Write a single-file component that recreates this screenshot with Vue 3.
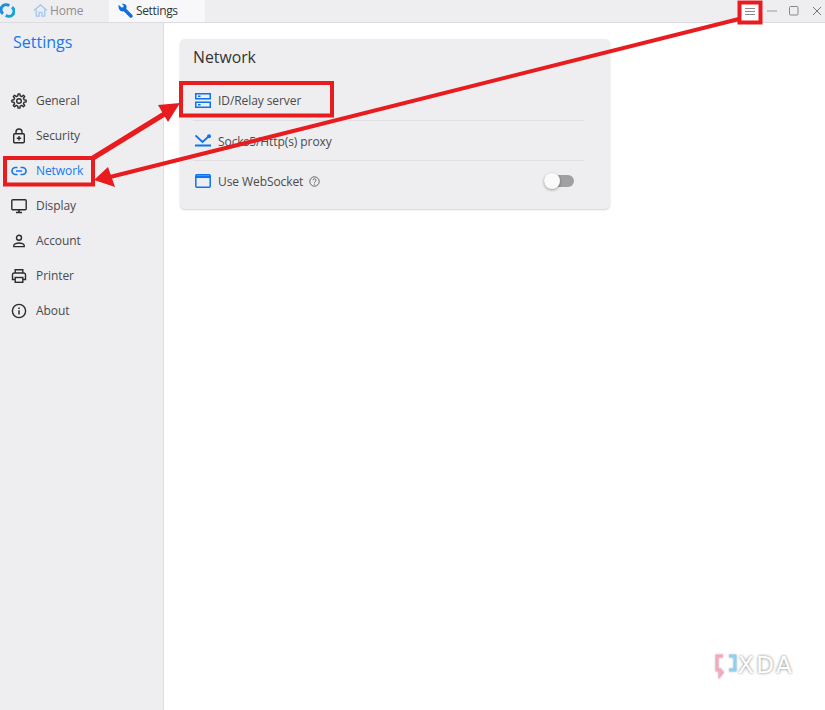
<script setup>
const nav = [
  { label: 'General', icon: 'gear' },
  { label: 'Security', icon: 'lock' },
  { label: 'Network', icon: 'link', active: true },
  { label: 'Display', icon: 'display' },
  { label: 'Account', icon: 'user' },
  { label: 'Printer', icon: 'printer' },
  { label: 'About', icon: 'info' },
]

function gearPath(cx, cy, outer, inner, teeth) {
  const pts = []
  const step = (Math.PI * 2) / teeth
  for (let i = 0; i < teeth; i++) {
    const a = i * step - Math.PI / 2
    const w = step * 0.2
    const at = (r, t) => `${(cx + r * Math.cos(t)).toFixed(2)} ${(cy + r * Math.sin(t)).toFixed(2)}`
    pts.push(at(inner, a - w * 1.5), at(outer, a - w * 0.8), at(outer, a + w * 0.8), at(inner, a + w * 1.5))
  }
  return 'M' + pts.join('L') + 'Z'
}
const gear = gearPath(8, 8, 7.2, 5.2, 8)
</script>

<template>
  <div class="app">
    <header class="titlebar">
      <svg class="logo" width="15" height="15" viewBox="0 0 16 16" fill="none">
        <path d="M3.200 11.500A5.400 5.400 0 0 1 9.800 2.900" stroke="#1a8fe0" stroke-width="3.200" />
        <path d="M12.800 4.500A5.400 5.400 0 0 1 6.200 13.100" stroke="#12a6d8" stroke-width="3.200" />
      </svg>
      <div class="tab home">
        <svg width="15" height="15" viewBox="0 0 16 16" fill="none" stroke="#a5c9ef" stroke-width="1.500">
          <path d="M1 8 8 2l7 6" />
          <path d="M3.500 7v7h3v-4h3v4h3V7" />
        </svg>
        <span>Home</span>
      </div>
      <div class="tab current">
        <svg width="16" height="16" viewBox="0 0 16 16" fill="#0d6fe0">
          <path d="M1.600 1.800 4.600 4.600 6.300 4.200 6.600 2.400 4.900 1C6.800.1 9.400 1.200 9.600 3.600 9.700 4.400 9.500 5.100 9.200 5.700L15.200 11.700C16 12.500 15.900 13.600 15.200 14.300 14.500 15 13.400 15 12.700 14.200L6.700 8.200C4 9 1 7.200 1.600 1.800Z" />
        </svg>
        <span>Settings</span>
      </div>
      <div class="window-controls">
        <button class="ctl menu" aria-label="Menu">
          <svg width="10" height="7" viewBox="0 0 10 7" stroke="#8a8a8a" fill="none"><path d="M0 .5h10M0 3.500h10M0 6.500h10" /></svg>
        </button>
        <button class="ctl" aria-label="Minimize">
          <svg width="10" height="10" viewBox="0 0 10 10" stroke="#999" fill="none"><path d="M0 5h10" /></svg>
        </button>
        <button class="ctl" aria-label="Maximize">
          <svg width="10" height="10" viewBox="0 0 10 10" stroke="#888" fill="none"><rect x=".5" y=".5" width="8.500" height="8.500" rx="1" /></svg>
        </button>
        <button class="ctl" aria-label="Close">
          <svg width="10" height="10" viewBox="0 0 10 10" stroke="#777" fill="none"><path d="M1 1l8 8M9 1 1 9" /></svg>
        </button>
      </div>
    </header>

    <div class="body">
      <aside class="sidebar">
        <h1 class="side-title">Settings</h1>
        <nav class="nav">
          <div v-for="item in nav" :key="item.label" class="nav-item" :class="{ active: item.active }">
            <svg class="nav-icon" width="16" height="16" viewBox="0 0 16 16" fill="none" stroke="currentColor" stroke-width="1.400">
              <template v-if="item.icon === 'gear'">
                <circle cx="8" cy="8" r="2.300" />
                <path :d="gear" stroke-linejoin="round" />
              </template>
              <template v-else-if="item.icon === 'lock'">
                <rect x="2.700" y="5.800" width="10.600" height="9" rx="1" />
                <path d="M5 5.800V4a3 3 0 0 1 6 0v1.800M8 8v4.600M5.800 10.300h4.400" />
              </template>
              <template v-else-if="item.icon === 'link'">
                <path d="M6.500 4.500H4.500a3.500 3.500 0 0 0 0 7h2M9.500 4.500h2a3.500 3.500 0 0 1 0 7h-2M5 8h6" stroke-width="1.700" />
              </template>
              <template v-else-if="item.icon === 'display'">
                <rect x=".8" y="1.800" width="14.400" height="10" rx="1" />
                <path d="M8 12v2.500M5 14.500h6" stroke-width="1.700" />
              </template>
              <template v-else-if="item.icon === 'user'">
                <circle cx="8" cy="4.800" r="2.500" />
                <path d="M2.800 13.600v-1c0-1.700 3.200-2.600 5.200-2.600s5.200.9 5.200 2.600v1Z" />
              </template>
              <template v-else-if="item.icon === 'printer'">
                <path d="M4.200 5V1.800h7.600V5M4 11.500H1.500V6.800A1.800 1.800 0 0 1 3.300 5h9.400a1.800 1.800 0 0 1 1.800 1.800v4.700H12" />
                <rect x="4.200" y="9.500" width="7.600" height="4.800" />
              </template>
              <template v-else>
                <circle cx="8" cy="8" r="6.600" />
                <path d="M8 7.200v4.300M8 4.400v1.500" stroke-width="1.500" />
              </template>
            </svg>
            <span>{{ item.label }}</span>
          </div>
        </nav>
      </aside>

      <main class="main">
        <section class="card">
          <h2 class="card-title">Network</h2>
          <div class="row first">
            <svg class="row-icon" width="16" height="15" viewBox="0 0 16 15" fill="#0d73ee">
              <path fill-rule="evenodd" d="M0 0h16v6.500H0ZM1.500 1.500v3.500h13V1.500ZM3 2.500h2.500v1.500H3ZM0 8.500h16V15H0ZM1.500 10v3.500h13V10ZM3 11h2.500v1.500H3Z" />
            </svg>
            <span>ID/Relay server</span>
          </div>
          <div class="row">
            <svg class="row-icon" width="16" height="14" viewBox="0 0 16 14" fill="none" stroke="#0d73ee" stroke-width="1.800">
              <path d="M.5 1.500 7.500 8 13 3M0 11.500h16" />
              <circle cx="14" cy="2.300" r="2" fill="#0d73ee" stroke="none" />
            </svg>
            <span>Socks5/Http(s) proxy</span>
          </div>
          <div class="row">
            <svg class="row-icon" width="16" height="14" viewBox="0 0 16 14" fill="none" stroke="#0d73ee" stroke-width="1.500">
              <rect x=".8" y=".8" width="14.400" height="12.400" rx="1" />
              <path d="M1 2.800h14" stroke-width="2.500" />
            </svg>
            <span>Use WebSocket</span>
            <svg class="help" width="11" height="11" viewBox="0 0 11 11" fill="none" stroke="#555" stroke-width=".9">
              <circle cx="5.500" cy="5.500" r="4.700" />
              <path d="M4 4.300a1.500 1.500 0 1 1 2.300 1.300c-.6.300-.8.600-.8 1.100M5.500 7.600v1" />
            </svg>
            <div class="switch"><span class="knob"></span></div>
          </div>
        </section>
      </main>
    </div>

    <svg class="annotations" width="825" height="710" viewBox="0 0 825 710" fill="none">
      <g stroke="#e81b1f" stroke-width="4">
        <rect x="739.500" y="2.500" width="21" height="20" />
        <rect x="5" y="158" width="88" height="26.500" />
        <rect x="181" y="83" width="151" height="32.500" />
        <path d="M739 19 106 178" />
        <path d="M93 158 166 113" stroke-width="5" />
      </g>
      <g fill="#e81b1f">
        <path d="M94 180 108 167 115 187Z" />
        <path d="M180 103 158 105 168 122Z" />
      </g>
    </svg>

    <div class="watermark">
      <svg width="24" height="26" viewBox="0 0 24 26" fill="none" stroke-width="3">
        <path d="M9 3H3v14h3v5l3-4" stroke="#f3a9bd" />
        <path d="M15 3h6v14h-6" stroke="#8fd0f2" />
      </svg>
      <span>XDA</span>
    </div>
  </div>
</template>

<style>
html, body { margin: 0; background: #fff; }
</style>

<style scoped>
.app {
  position: relative;
  width: 825px;
  height: 710px;
  overflow: hidden;
  background: #fff;
  font-family: "Open Sans", "Noto Sans", sans-serif;
  color: #4a4a4d;
}
.titlebar {
  display: flex;
  align-items: stretch;
  height: 22px;
  background: #eeeef0;
  border-bottom: 1px solid #dcdce0;
}
.logo { margin: 3px 0 0 0; }
.tab {
  display: flex;
  align-items: center;
  padding-bottom: 1px;
  box-sizing: border-box;
  font-size: 12px;
}
.tab.home { width: 94px; padding-left: 18px; gap: 2px; color: #8f8f93; letter-spacing: -.15px; }
.tab.current { width: 96px; padding-left: 8px; background: #f8f8fa; color: #333; gap: 3px; letter-spacing: -.35px; }
.window-controls { display: flex; margin: 0 -3px 0 auto; align-items: center; }
.ctl {
  display: flex;
  align-items: center;
  justify-content: center;
  width: 22.400px;
  height: 22px;
  padding: 0;
  border: 0;
  background: none;
}
.ctl.menu { background: #fff; }
.body { display: flex; height: 687px; }
.sidebar {
  width: 163px;
  flex: none;
  background: #eeeef0;
  border-right: 1px solid #dcdce0;
}
.side-title {
  margin: 8px 0 0 13px;
  font-size: 16px;
  line-height: 22px;
  font-weight: 400;
  color: #1678f0;
}
.nav { margin-top: 30px; }
.nav-item {
  display: flex;
  align-items: center;
  gap: 9px;
  height: 35px;
  padding-left: 11px;
  font-size: 12px;
  letter-spacing: -.08px;
  color: #4a4a4d;
}
.nav-icon { color: #2c2c2e; flex: none; }
.nav-item.active, .nav-item.active .nav-icon { color: #1678f0; }
.main { flex: 1; padding: 16px 0 0 16px; }
.card {
  width: 430px;
  height: 170px;
  box-sizing: border-box;
  padding: 0 26px 0 13px;
  background: #eeeef0;
  border-radius: 5px;
  box-shadow: 0 1px 2px rgba(0, 0, 0, .18);
}
.card-title {
  margin: 0;
  padding-top: 7px;
  height: 41px;
  box-sizing: border-box;
  font-size: 15.800px;
  line-height: 22px;
  font-weight: 400;
  color: #333;
}
.row {
  display: flex;
  align-items: center;
  box-sizing: border-box;
  height: 40px;
  padding-top: 1px;
  border-top: 1px solid #dfdfe3;
  font-size: 12px;
  letter-spacing: -.08px;
  color: #4a4a4d;
}
.row.first { border-top: 0; padding-top: 0; }
.row-icon { margin: 0 7px 0 2px; flex: none; }
.help { margin-left: 6px; }
.switch {
  position: relative;
  width: 30px;
  height: 12px;
  margin: 0 10px 0 auto;
  background: #a0a0a3;
  border-radius: 6px;
}
.knob {
  position: absolute;
  left: 0;
  top: -2px;
  width: 16px;
  height: 16px;
  border-radius: 50%;
  background: #fafafa;
  box-shadow: 0 1px 3px rgba(0, 0, 0, .35);
}
.annotations { position: absolute; left: 0; top: 0; pointer-events: none; }
.watermark {
  position: absolute;
  left: 714px;
  top: 653px;
  display: flex;
  align-items: flex-start;
  gap: 0;
  color: #fff;
  font-family: "DejaVu Sans", sans-serif;
  font-size: 23px;
  line-height: 24px;
  letter-spacing: 2.500px;
  text-shadow: 0 0 3px rgba(0, 0, 0, .55);
}
.watermark svg { filter: drop-shadow(0 0 1px rgba(0, 0, 0, .25)); }
</style>
